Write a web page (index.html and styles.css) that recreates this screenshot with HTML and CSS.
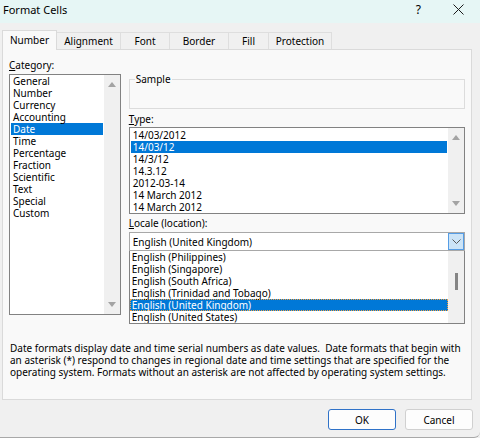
FILE: index.html
```html
<!DOCTYPE html>
<html lang="en">
<head>
<meta charset="UTF-8">
<title>Format Cells</title>
<link rel="stylesheet" href="styles.css">
</head>
<body>
<div class="dialog">
    <div class="titlebar">
        <span class="title">Format Cells</span>
        <span class="help">?</span>
        <svg class="close" width="11" height="11" viewBox="0 0 11 11"><path d="M0.5 0.5L10.5 10.5M10.5 0.5L0.5 10.5" stroke="#1a1a1a" stroke-width="1" fill="none"/></svg>
    </div>

    <div class="tabs">
        <div class="tab active">Number</div>
        <div class="tab">Alignment</div>
        <div class="tab">Font</div>
        <div class="tab">Border</div>
        <div class="tab">Fill</div>
        <div class="tab">Protection</div>
    </div>

    <div class="panel">
        <div class="columns">
            <div class="left">
                <div class="label"><u>C</u>ategory:</div>
                <div class="listbox category">
                    <ul class="items">
                        <li>General</li>
                        <li>Number</li>
                        <li>Currency</li>
                        <li>Accounting</li>
                        <li class="selected">Date</li>
                        <li>Time</li>
                        <li>Percentage</li>
                        <li>Fraction</li>
                        <li>Scientific</li>
                        <li>Text</li>
                        <li>Special</li>
                        <li>Custom</li>
                    </ul>
                    <div class="vscroll">
                        <span class="arrow up"></span>
                        <span class="arrow down"></span>
                    </div>
                </div>
            </div>

            <div class="right">
                <div class="group">
                    <span class="legend">Sample</span>
                </div>

                <div class="label type-label"><u>T</u>ype:</div>
                <div class="listbox type">
                    <ul class="items">
                        <li>14/03/2012</li>
                        <li class="selected">14/03/12</li>
                        <li>14/3/12</li>
                        <li>14.3.12</li>
                        <li>2012-03-14</li>
                        <li>14 March 2012</li>
                        <li>14 March 2012</li>
                    </ul>
                    <div class="vscroll">
                        <span class="arrow up"></span>
                        <span class="arrow down"></span>
                    </div>
                </div>

                <div class="label locale-label"><u>L</u>ocale (location):</div>
                <div class="combo">
                    <span class="value">English (United Kingdom)</span>
                    <span class="drop">
                        <svg width="9" height="5" viewBox="0 0 9 5"><path d="M0.5 0.5L4.5 4.5L8.5 0.5" stroke="#5a5a5a" stroke-width="1" fill="none"/></svg>
                    </span>
                </div>
                <div class="droplist">
                    <ul class="items">
                        <li>English (Philippines)</li>
                        <li>English (Singapore)</li>
                        <li>English (South Africa)</li>
                        <li>English (Trinidad and Tobago)</li>
                        <li class="selected focus">English (United Kingdom)</li>
                        <li>English (United States)</li>
                    </ul>
                    <div class="vscroll plain">
                        <span class="thumb"></span>
                    </div>
                </div>
            </div>
        </div>

        <p class="desc">Date formats display date and time serial numbers as date values.&nbsp; Date formats that begin with<br>an asterisk (*) respond to changes in regional date and time settings that are specified for the<br>operating system. Formats without an asterisk are not affected by operating system settings.</p>
    </div>

    <div class="buttons">
        <button class="btn default">OK</button>
        <button class="btn">Cancel</button>
    </div>
</div>
</body>
</html>
```

FILE: styles.css
```css
body {
    margin: 0;
    padding: 0;
    background-color: #f0f0f0;
    font-family: "Noto Sans", "Open Sans", sans-serif;
    font-size: 10px;
    color: #000;
}
ul {
    list-style: none;
    margin: 0;
    padding: 0;
}
.dialog {
    width: 480px;
    height: 438px;
    box-sizing: border-box;
    border-bottom: 1px solid #a8a8a8;
    border-bottom-right-radius: 6px;
    display: flex;
    flex-direction: column;
    overflow: hidden;
}
.titlebar {
    height: 23px;
    background-color: #e6f6f5;
    display: flex;
    align-items: center;
    padding: 0 0 4px 3px;
    box-sizing: border-box;
}
.title {
    font-size: 11px;
    flex-grow: 1;
}
.help {
    font-size: 12px;
    margin-right: 32px;
}
.close {
    margin-right: 16px;
}

/* tabs */
.tabs {
    display: flex;
    align-items: flex-end;
    height: 19px;
    margin-top: 7px;
    padding-left: 2px;
}
.tab {
    height: 17px;
    line-height: 16px;
    border: 1px solid #dedede;
    border-bottom: none;
    margin-right: -1px;
    background-color: #f0f0f0;
    box-sizing: border-box;
    text-align: center;
}
.tab:nth-child(1) { width: 55px; }
.tab:nth-child(2) { width: 65px; }
.tab:nth-child(3) { width: 50px; }
.tab:nth-child(4) { width: 60px; }
.tab:nth-child(5) { width: 41px; }
.tab:nth-child(6) { width: 64px; }
.tab.active {
    height: 20px;
    line-height: 19px;
    background-color: #f9f9f9;
    border-color: #dadada;
    position: relative;
    z-index: 1;
    margin-bottom: -1px;
}

.panel {
    margin-left: 2px;
    width: 470px;
    height: 351px;
    box-sizing: border-box;
    background-color: #f9f9f9;
    border: 1px solid #dadada;
    padding: 9px 6px 0 6px;
}
.columns {
    display: flex;
    gap: 8px;
}
.left {
    width: 112px;
}
.right {
    width: 337px;
}
.label {
    line-height: 12px;
    height: 12px;
}

/* list boxes */
.listbox, .droplist {
    display: flex;
    border: 1px solid #828282;
    background-color: #fff;
    overflow: hidden;
    box-sizing: border-box;
}
.listbox .items, .droplist .items {
    flex-grow: 1;
    padding: 0 1px;
}
.items li {
    height: 12px;
    line-height: 12px;
    padding-left: 2px;
    white-space: nowrap;
}
.items li.selected {
    background-color: #0078d7;
    color: #fff;
}
.items li.focus {
    outline: 1px dotted #f5a040;
    outline-offset: -1px;
}
.category {
    margin-top: 3px;
    height: 241px;
}
.vscroll {
    width: 16px;
    flex-shrink: 0;
    background-color: #f0f0f0;
    display: flex;
    flex-direction: column;
    justify-content: space-between;
    align-items: center;
    padding: 7px 0;
    box-sizing: border-box;
}
.arrow {
    width: 0;
    height: 0;
    border-left: 4px solid transparent;
    border-right: 4px solid transparent;
}
.arrow.up {
    border-bottom: 5px solid #a3a3a3;
}
.arrow.down {
    border-top: 5px solid #a3a3a3;
}

.group {
    margin-top: 20px;
    height: 30px;
    border: 1px solid #dcdcdc;
    box-sizing: border-box;
    position: relative;
}
.legend {
    position: absolute;
    top: -7px;
    left: 5px;
    padding: 0 1px;
    background-color: #f9f9f9;
    line-height: 12px;
}
.type-label {
    margin-top: 4px;
}
.type {
    margin-top: 2px;
    height: 87px;
}
.type .items {
    padding-top: 1px;
}
.locale-label {
    margin-top: 3px;
}
.combo {
    margin-top: 3px;
    height: 19px;
    border: 1px solid #a8a8a8;
    background-color: #fff;
    display: flex;
    align-items: center;
    box-sizing: border-box;
    padding-left: 3px;
}
.combo .value {
    flex-grow: 1;
}
.combo .drop {
    width: 16px;
    height: 17px;
    box-sizing: border-box;
    background-color: #cce4f7;
    border: 1px solid #569de5;
    display: flex;
    align-items: center;
    justify-content: center;
}
.droplist {
    height: 73px;
    border-top: none;
}
.droplist .items {
    padding: 0;
}
.vscroll.plain {
    justify-content: flex-start;
    padding-top: 22px;
}
.thumb {
    width: 3px;
    height: 17px;
    background-color: #858585;
    margin-left: 1px;
}
.desc {
    margin: 18px 0 0 1px;
    line-height: 12px;
    white-space: nowrap;
}

.buttons {
    display: flex;
    justify-content: flex-end;
    gap: 9px;
    margin-top: 9px;
    padding-right: 7px;
}
.btn {
    width: 68px;
    height: 21px;
    font-family: inherit;
    font-size: 10px;
    background-color: #fdfdfd;
    border: 1px solid #d0d0d0;
    border-radius: 3px;
    padding: 0;
    color: #000;
}
.btn.default {
    border: 1px solid #2f72c8;
}
```
